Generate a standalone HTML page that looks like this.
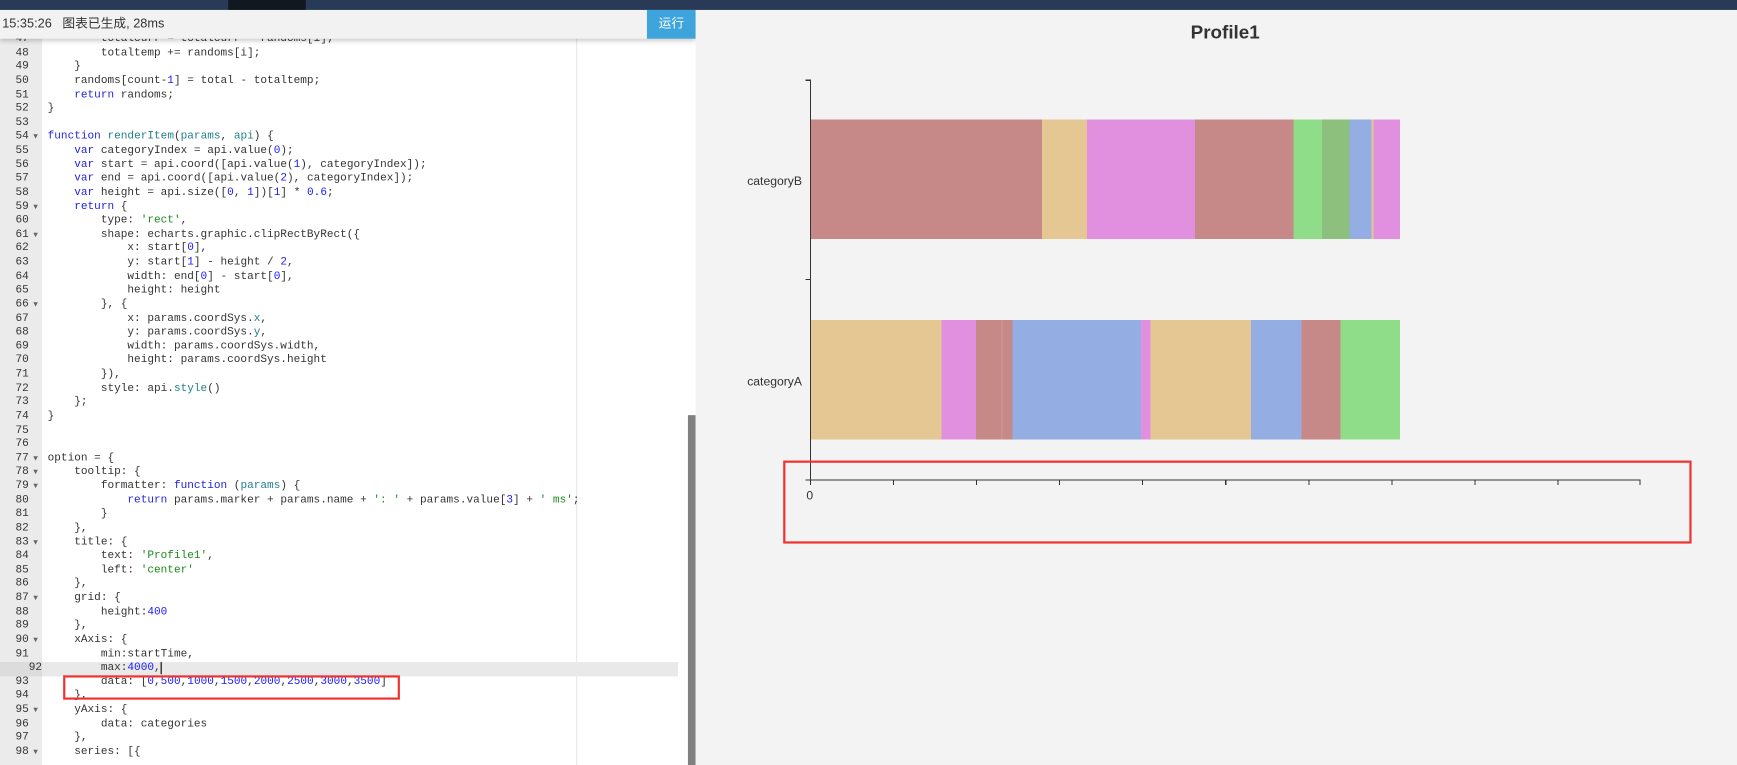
<!DOCTYPE html>
<html><head><meta charset="utf-8"><style>
html,body{margin:0;padding:0;width:1737px;height:765px;overflow:hidden;background:#f3f3f3}
#s{position:absolute;left:0;top:0;width:1568px;height:691px;transform:scale(1.10778,1.1071);transform-origin:0 0;font-family:"Liberation Sans","Noto Sans CJK SC",sans-serif}
.top{position:absolute;left:0;top:0;width:1568px;height:9px;background:#283a56}
.top i{position:absolute;left:206px;width:70px;top:0;height:9px;background:#111820}
.left{position:absolute;left:0;top:9px;width:628px;height:682px;background:#fff;overflow:hidden}
.status{position:absolute;left:0;top:0;width:628px;height:26px;background:#f2f2f2;box-shadow:0 2px 4px rgba(0,0,0,.2);z-index:5;font-size:11.5px;color:#333;line-height:26px}
.status span{position:absolute;left:2px}
.btn{position:absolute;left:584px;top:0;width:44px;height:26px;background:#3ea5dc;color:#fff;text-align:center;font-size:11.5px}
.gutter{position:absolute;left:0;top:0;width:38px;height:682px;background:#ebebeb}
.code{position:absolute;left:0;top:21px;font-family:"Liberation Mono",monospace;font-size:10px;color:#333}
.l{position:relative;height:12.64px;line-height:12.64px;white-space:pre;width:612px}
.n{position:absolute;left:0;width:26px;text-align:right;color:#333}
.f{position:absolute;left:30px;font-size:7px;color:#666}
.t{position:absolute;left:43px}
.hl{background:#e9e9e9}
.hl .n{background:#dcdcdc;width:38px;padding-right:0}
.k{color:#2222dd}.d{color:#1a1aff}.s{color:#1a8a1a}.p{color:#20808a}
.margin{position:absolute;left:520px;top:0;width:1px;height:682px;background:#e8e8e8}
.scroll{position:absolute;left:621px;top:366px;width:7px;height:316px;background:#808080}
.rb{position:absolute;border:2px solid #ee3333;box-sizing:border-box}
.right{position:absolute;left:628px;top:9px;width:940px;height:682px;background:#f3f3f3}
.seg{position:absolute}
</style></head><body><div id="s">
<div class="top"><i></i></div>
<div class="left">
<div class="gutter"></div>
<div class="margin"></div>
<div class="code">
<div class="l"><span class="n">47</span><span class="t">        totalcurr = totalcurr - randoms[i];</span></div>
<div class="l"><span class="n">48</span><span class="t">        totaltemp += randoms[i];</span></div>
<div class="l"><span class="n">49</span><span class="t">    }</span></div>
<div class="l"><span class="n">50</span><span class="t">    randoms[count-<span class="d">1</span>] = total - totaltemp;</span></div>
<div class="l"><span class="n">51</span><span class="t">    <span class="k">return</span> randoms;</span></div>
<div class="l"><span class="n">52</span><span class="t">}</span></div>
<div class="l"><span class="n">53</span><span class="t"></span></div>
<div class="l"><span class="n">54</span><span class="f">▼</span><span class="t"><span class="k">function</span> <span class="p">renderItem</span>(<span class="p">params</span>, <span class="p">api</span>) {</span></div>
<div class="l"><span class="n">55</span><span class="t">    <span class="k">var</span> categoryIndex = api.value(<span class="d">0</span>);</span></div>
<div class="l"><span class="n">56</span><span class="t">    <span class="k">var</span> start = api.coord([api.value(<span class="d">1</span>), categoryIndex]);</span></div>
<div class="l"><span class="n">57</span><span class="t">    <span class="k">var</span> end = api.coord([api.value(<span class="d">2</span>), categoryIndex]);</span></div>
<div class="l"><span class="n">58</span><span class="t">    <span class="k">var</span> height = api.size([<span class="d">0</span>, <span class="d">1</span>])[<span class="d">1</span>] * <span class="d">0.6</span>;</span></div>
<div class="l"><span class="n">59</span><span class="f">▼</span><span class="t">    <span class="k">return</span> {</span></div>
<div class="l"><span class="n">60</span><span class="t">        type: <span class="s">'rect'</span>,</span></div>
<div class="l"><span class="n">61</span><span class="f">▼</span><span class="t">        shape: echarts.graphic.clipRectByRect({</span></div>
<div class="l"><span class="n">62</span><span class="t">            x: start[<span class="d">0</span>],</span></div>
<div class="l"><span class="n">63</span><span class="t">            y: start[<span class="d">1</span>] - height / <span class="d">2</span>,</span></div>
<div class="l"><span class="n">64</span><span class="t">            width: end[<span class="d">0</span>] - start[<span class="d">0</span>],</span></div>
<div class="l"><span class="n">65</span><span class="t">            height: height</span></div>
<div class="l"><span class="n">66</span><span class="f">▼</span><span class="t">        }, {</span></div>
<div class="l"><span class="n">67</span><span class="t">            x: params.coordSys.<span class="p">x</span>,</span></div>
<div class="l"><span class="n">68</span><span class="t">            y: params.coordSys.<span class="p">y</span>,</span></div>
<div class="l"><span class="n">69</span><span class="t">            width: params.coordSys.width,</span></div>
<div class="l"><span class="n">70</span><span class="t">            height: params.coordSys.height</span></div>
<div class="l"><span class="n">71</span><span class="t">        }),</span></div>
<div class="l"><span class="n">72</span><span class="t">        style: api.<span class="p">style</span>()</span></div>
<div class="l"><span class="n">73</span><span class="t">    };</span></div>
<div class="l"><span class="n">74</span><span class="t">}</span></div>
<div class="l"><span class="n">75</span><span class="t"></span></div>
<div class="l"><span class="n">76</span><span class="t"></span></div>
<div class="l"><span class="n">77</span><span class="f">▼</span><span class="t">option = {</span></div>
<div class="l"><span class="n">78</span><span class="f">▼</span><span class="t">    tooltip: {</span></div>
<div class="l"><span class="n">79</span><span class="f">▼</span><span class="t">        formatter: <span class="k">function</span> (<span class="p">params</span>) {</span></div>
<div class="l"><span class="n">80</span><span class="t">            <span class="k">return</span> params.marker + params.name + <span class="s">': '</span> + params.value[<span class="d">3</span>] + <span class="s">' ms'</span>;</span></div>
<div class="l"><span class="n">81</span><span class="t">        }</span></div>
<div class="l"><span class="n">82</span><span class="t">    },</span></div>
<div class="l"><span class="n">83</span><span class="f">▼</span><span class="t">    title: {</span></div>
<div class="l"><span class="n">84</span><span class="t">        text: <span class="s">'Profile1'</span>,</span></div>
<div class="l"><span class="n">85</span><span class="t">        left: <span class="s">'center'</span></span></div>
<div class="l"><span class="n">86</span><span class="t">    },</span></div>
<div class="l"><span class="n">87</span><span class="f">▼</span><span class="t">    grid: {</span></div>
<div class="l"><span class="n">88</span><span class="t">        height:<span class="d">400</span></span></div>
<div class="l"><span class="n">89</span><span class="t">    },</span></div>
<div class="l"><span class="n">90</span><span class="f">▼</span><span class="t">    xAxis: {</span></div>
<div class="l"><span class="n">91</span><span class="t">        min:startTime,</span></div>
<div class="l hl"><span class="n">92</span><span class="t">        max:<span class="d">4000</span>,<span style="border-left:1.5px solid #000">&#8203;</span></span></div>
<div class="l"><span class="n">93</span><span class="t">        data: [<span class="d">0</span>,<span class="d">500</span>,<span class="d">1000</span>,<span class="d">1500</span>,<span class="d">2000</span>,<span class="d">2500</span>,<span class="d">3000</span>,<span class="d">3500</span>]</span></div>
<div class="l"><span class="n">94</span><span class="t">    },</span></div>
<div class="l"><span class="n">95</span><span class="f">▼</span><span class="t">    yAxis: {</span></div>
<div class="l"><span class="n">96</span><span class="t">        data: categories</span></div>
<div class="l"><span class="n">97</span><span class="t">    },</span></div>
<div class="l"><span class="n">98</span><span class="f">▼</span><span class="t">    series: [{</span></div>
</div>
<div class="scroll"></div>
<div class="status"><span>15:35:26&nbsp;&nbsp; 图表已生成, 28ms</span><div class="btn">运行</div></div>
</div>
<div class="rb" style="left:57px;top:610px;width:304px;height:22px"></div>
<div class="right">
<div style="position:absolute;left:0;width:956px;top:11px;text-align:center;font-weight:bold;font-size:17px;color:#333">Profile1</div>
</div>
<svg style="position:absolute;left:0;top:0" width="1568" height="691">
<g shape-rendering="crispEdges">
<rect x="731" y="108" width="210" height="108" fill="#c78987"/>
<rect x="940.7" y="108" width="40.6" height="108" fill="#e4c792"/>
<rect x="981.3" y="108" width="97.3" height="108" fill="#e190e0"/>
<rect x="1078.6" y="108" width="88.9" height="108" fill="#c78987"/>
<rect x="1167.5" y="108" width="25.7" height="108" fill="#8fdc89"/>
<rect x="1193.2" y="108" width="25.1" height="108" fill="#8cc07c"/>
<rect x="1218.3" y="108" width="19.7" height="108" fill="#94aee3"/>
<rect x="1238" y="108" width="1.8" height="108" fill="#e4c792"/>
<rect x="1239.8" y="108" width="23.8" height="108" fill="#e190e0"/>
<rect x="731" y="289" width="119" height="108" fill="#e4c792"/>
<rect x="850" y="289" width="31" height="108" fill="#e190e0"/>
<rect x="881" y="289" width="33" height="108" fill="#c78987"/>
<rect x="904" y="289" width="1" height="108" fill="#d09a98"/>
<rect x="913.8" y="289" width="116.2" height="108" fill="#94aee3"/>
<rect x="1030" y="289" width="8.6" height="108" fill="#e190e0"/>
<rect x="1038.6" y="289" width="90.7" height="108" fill="#e4c792"/>
<rect x="1129.3" y="289" width="45.4" height="108" fill="#94aee3"/>
<rect x="1174.7" y="289" width="35.3" height="108" fill="#c78987"/>
<rect x="1210" y="289" width="53.6" height="108" fill="#8fdc89"/>
<line x1="731.5" y1="72" x2="731.5" y2="433" stroke="#333"/>
<line x1="727" y1="72.5" x2="731" y2="72.5" stroke="#333"/>
<line x1="727" y1="252.5" x2="731" y2="252.5" stroke="#333"/>
<line x1="727" y1="433.5" x2="731" y2="433.5" stroke="#333"/>
<line x1="731" y1="433.5" x2="1481" y2="433.5" stroke="#333"/>
<g stroke="#333">
<line x1="731.5" y1="433" x2="731.5" y2="438"/><line x1="806.5" y1="433" x2="806.5" y2="438"/>
<line x1="881.5" y1="433" x2="881.5" y2="438"/><line x1="956.5" y1="433" x2="956.5" y2="438"/>
<line x1="1031.5" y1="433" x2="1031.5" y2="438"/><line x1="1106.5" y1="433" x2="1106.5" y2="438"/>
<line x1="1181.5" y1="433" x2="1181.5" y2="438"/><line x1="1256.5" y1="433" x2="1256.5" y2="438"/>
<line x1="1331.5" y1="433" x2="1331.5" y2="438"/><line x1="1406.5" y1="433" x2="1406.5" y2="438"/>
<line x1="1480.5" y1="433" x2="1480.5" y2="438"/>
</g>
</g>
<g font-family="Liberation Sans, sans-serif" font-size="11" fill="#333">
<text x="724" y="167" text-anchor="end">categoryB</text>
<text x="724" y="348" text-anchor="end">categoryA</text>
<text x="731" y="451" text-anchor="middle">0</text>
</g>
<rect x="708" y="417" width="818" height="73" fill="none" stroke="#ee3333" stroke-width="2"/>
</svg>
</div></body></html>
